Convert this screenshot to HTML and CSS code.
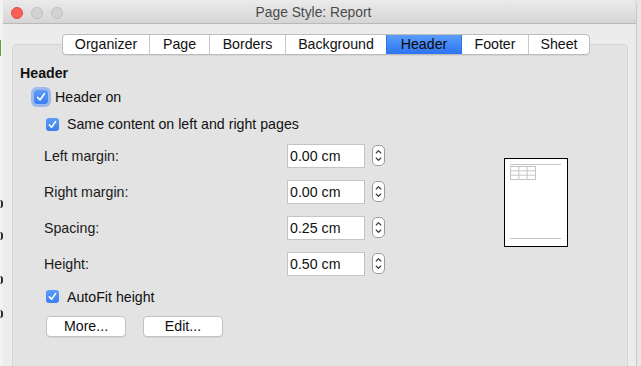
FILE: index.html
```html
<!DOCTYPE html>
<html>
<head>
<meta charset="utf-8">
<link rel="stylesheet" href="styles.css">
</head>
<body>
<div class="desk">
  <div class="behind">
    <span class="frag f1"></span>
    <span class="frag f2"></span>
    <span class="frag f3"></span>
    <span class="frag f4"></span>
  </div>
  <div class="window">
    <div class="titlebar">
      <div class="lights">
        <span class="light close"></span>
        <span class="light dim"></span>
        <span class="light dim"></span>
      </div>
      <div class="title">Page Style: Report</div>
    </div>
    <div class="wbody">
      <div class="tabs">
        <div class="tab t-org">Organizer</div>
        <div class="tab t-page">Page</div>
        <div class="tab t-bord">Borders</div>
        <div class="tab t-bg">Background</div>
        <div class="tab t-head active">Header</div>
        <div class="tab t-foot">Footer</div>
        <div class="tab t-sheet">Sheet</div>
      </div>
      <div class="panel">
        <div class="heading">Header</div>
        <div class="check-row row-on">
          <span class="cb focus"><svg viewBox="0 0 14 14" width="14" height="14"><path d="M3.6 7.4 L6 10 L10.4 3.8" fill="none" stroke="#fff" stroke-width="1.6" stroke-linecap="round" stroke-linejoin="round"/></svg></span>
          <span class="cb-label">Header on</span>
        </div>
        <div class="check-row row-same">
          <span class="cb"><svg viewBox="0 0 14 14" width="13" height="13"><path d="M3.6 7.4 L6 10 L10.4 3.8" fill="none" stroke="#fff" stroke-width="1.6" stroke-linecap="round" stroke-linejoin="round"/></svg></span>
          <span class="cb-label">Same content on left and right pages</span>
        </div>
        <div class="form-area">
          <div class="fields">
            <div class="field">
              <span class="flabel">Left margin:</span>
              <span class="input">0.00 cm</span>
              <span class="spin"><svg viewBox="0 0 13 21" width="13" height="21"><path d="M4.2 8 L6.5 5.6 L8.8 8 M4.2 13 L6.5 15.4 L8.8 13" fill="none" stroke="#333" stroke-width="1.1" stroke-linecap="round" stroke-linejoin="round"/></svg></span>
            </div>
            <div class="field">
              <span class="flabel">Right margin:</span>
              <span class="input">0.00 cm</span>
              <span class="spin"><svg viewBox="0 0 13 21" width="13" height="21"><path d="M4.2 8 L6.5 5.6 L8.8 8 M4.2 13 L6.5 15.4 L8.8 13" fill="none" stroke="#333" stroke-width="1.1" stroke-linecap="round" stroke-linejoin="round"/></svg></span>
            </div>
            <div class="field">
              <span class="flabel">Spacing:</span>
              <span class="input">0.25 cm</span>
              <span class="spin"><svg viewBox="0 0 13 21" width="13" height="21"><path d="M4.2 8 L6.5 5.6 L8.8 8 M4.2 13 L6.5 15.4 L8.8 13" fill="none" stroke="#333" stroke-width="1.1" stroke-linecap="round" stroke-linejoin="round"/></svg></span>
            </div>
            <div class="field">
              <span class="flabel">Height:</span>
              <span class="input">0.50 cm</span>
              <span class="spin"><svg viewBox="0 0 13 21" width="13" height="21"><path d="M4.2 8 L6.5 5.6 L8.8 8 M4.2 13 L6.5 15.4 L8.8 13" fill="none" stroke="#333" stroke-width="1.1" stroke-linecap="round" stroke-linejoin="round"/></svg></span>
            </div>
          </div>
          <div class="preview">
            <svg viewBox="0 0 64 89" width="64" height="89">
              <rect x="0.5" y="0.5" width="63" height="88" fill="#fff" stroke="#000" stroke-width="1"/>
              <line x1="6" y1="6.5" x2="57" y2="6.5" stroke="#c4c4c4" stroke-width="1.2"/>
              <g fill="none" stroke="#c4c4c4" stroke-width="1">
                <rect x="6.5" y="8.5" width="25" height="13"/>
                <line x1="6.5" y1="12.8" x2="31.5" y2="12.8"/>
                <line x1="6.5" y1="17.2" x2="31.5" y2="17.2"/>
                <line x1="14.8" y1="8.5" x2="14.8" y2="21.5"/>
                <line x1="23.2" y1="8.5" x2="23.2" y2="21.5"/>
              </g>
              <line x1="6" y1="80.5" x2="57" y2="80.5" stroke="#c4c4c4" stroke-width="1.2"/>
            </svg>
          </div>
        </div>
        <div class="check-row row-auto">
          <span class="cb"><svg viewBox="0 0 14 14" width="13" height="13"><path d="M3.6 7.4 L6 10 L10.4 3.8" fill="none" stroke="#fff" stroke-width="1.6" stroke-linecap="round" stroke-linejoin="round"/></svg></span>
          <span class="cb-label">AutoFit height</span>
        </div>
        <div class="buttons">
          <span class="btn">More...</span>
          <span class="btn">Edit...</span>
        </div>
      </div>
    </div>
  </div>
</div>
</body>
</html>
```
FILE: styles.css
```css
* { box-sizing: border-box; }
html, body { margin: 0; padding: 0; }
body {
  width: 641px;
  height: 366px;
  overflow: hidden;
  background: #e6e6e6;
  font-family: "Liberation Sans", Arial, sans-serif;
  font-size: 14px;
  color: #1a1a1a;
}
.desk { display: flex; height: 366px; }
.behind {
  width: 3px;
  flex: none;
  overflow: hidden;
  background: #f2f2f2;
  display: flex;
  flex-direction: column;
}
.behind::before {
  content: "";
  display: block;
  width: 3px;
  height: 16px;
  margin-top: 40px;
  border-left: 1px solid #5aa83c;
  flex: none;
}
.frag {
  display: block;
  width: 3px;
  height: 8px;
  border-right: 2px solid #2a2a2a;
  border-radius: 0 4px 4px 0;
  flex: none;
}
.f1 { margin-top: 144px; }
.f2 { margin-top: 24px; }
.f3 { margin-top: 36px; }
.f4 { margin-top: 26px; }

.window {
  width: 634px;
  flex: none;
  background: #ececec;
  border-right: 1px solid #c9c9c9;
  border-top-left-radius: 5px;
  border-top-right-radius: 5px;
  overflow: hidden;
  display: flex;
  flex-direction: column;
}
.titlebar {
  height: 24px;
  flex: none;
  background: linear-gradient(#ebebeb, #d5d5d5);
  border-bottom: 1px solid #b9b9b9;
  display: flex;
  align-items: center;
}
.lights {
  display: flex;
  gap: 8px;
  padding-left: 8px;
  padding-top: 2px;
}
.light {
  width: 12px;
  height: 12px;
  border-radius: 50%;
  display: block;
}
.close { background: #fc5f57; border: 1px solid #de4a43; }
.dim { background: #d2d2d2; border: 1px solid #c0c0c0; }
.title {
  flex: 1;
  text-align: center;
  color: #4a4a4a;
  font-size: 13.8px;
  padding-right: 72px;
  padding-top: 1px;
}

.wbody {
  flex: 1;
  padding: 10px 8px 0 9px;
  display: flex;
  flex-direction: column;
}
.tabs {
  display: flex;
  align-self: flex-start;
  margin-left: 50px;
  height: 21px;
  background: #fff;
  border: 1px solid #bdbdbd;
  border-radius: 4px;
  box-shadow: 0 1px 0 rgba(0,0,0,0.06);
  position: relative;
  z-index: 2;
  overflow: hidden;
}
.tab {
  height: 19px;
  line-height: 19px;
  text-align: center;
  color: #111;
  font-size: 14.2px;
  border-left: 1px solid #c8c8c8;
}
.tab:first-child { border-left: 0; }
.t-org { width: 86px; }
.t-page { width: 60px; }
.t-bord { width: 76px; }
.t-bg { width: 101px; }
.t-head { width: 75px; }
.t-foot { width: 67px; }
.t-sheet { width: 61px; }
.tab.active {
  background: linear-gradient(#5b9dfb, #2e74f1);
  border-left-color: #2e74f1;
  color: #0a0a0a;
}
.tab.active + .tab { border-left-color: #2e74f1; }

.panel {
  margin-top: -11px;
  flex: 1;
  background: #e3e3e3;
  border: 1px solid #d5d5d5;
  border-bottom: 0;
  border-radius: 5px 5px 0 0;
  padding: 19px 0 0 7px;
}
.heading {
  font-weight: bold;
  font-size: 14.2px;
  line-height: 18px;
  color: #111;
}
.check-row {
  display: flex;
  align-items: center;
  height: 18px;
}
.cb {
  flex: none;
  width: 13px;
  height: 13px;
  border-radius: 3px;
  background: linear-gradient(#5c9cf8, #3b7ff0);
  display: flex;
  align-items: center;
  justify-content: center;
}
.cb.focus {
  width: 14px;
  height: 14px;
  box-shadow: 0 0 0 3px rgba(100, 150, 240, 0.55);
}
.cb-label { color: #111; font-size: 14.2px; }
.row-on { margin-top: 6px; padding-left: 14px; }
.row-on .cb-label { margin-left: 7px; }
.row-same { margin-top: 9px; padding-left: 26px; }
.row-same .cb-label, .row-auto .cb-label { margin-left: 8px; }

.form-area {
  display: flex;
  margin-top: 11px;
}
.fields {
  display: flex;
  flex-direction: column;
  gap: 13px;
  padding-left: 24px;
  width: 484px;
}
.field {
  display: flex;
  align-items: center;
  height: 23px;
}
.flabel {
  width: 243px;
  color: #1a1a1a;
  font-size: 14.2px;
}
.input {
  width: 78px;
  height: 24px;
  line-height: 22px;
  background: #fff;
  border: 1px solid #c4c4c4;
  padding-left: 2px;
  font-size: 14.2px;
  color: #111;
}
.spin {
  margin-left: 7px;
  width: 13px;
  height: 21px;
  border: 1px solid #9c9c9c;
  border-radius: 5px;
  background: #fff;
  display: flex;
  overflow: hidden;
}
.spin svg { margin: -1px; flex: none; }
.preview {
  padding-top: 14px;
  padding-left: 0;
}
.preview svg { display: block; }

.row-auto { margin-top: 12px; padding-left: 26px; height: 19px; }
.buttons {
  display: flex;
  gap: 17px;
  margin-top: 10px;
  padding-left: 26px;
}
.btn {
  width: 80px;
  height: 21px;
  line-height: 19px;
  text-align: center;
  background: #fff;
  border: 1px solid #c2c2c2;
  border-radius: 4px;
  box-shadow: 0 1px 0 rgba(0,0,0,0.05);
  font-size: 14.2px;
  color: #111;
}
```
